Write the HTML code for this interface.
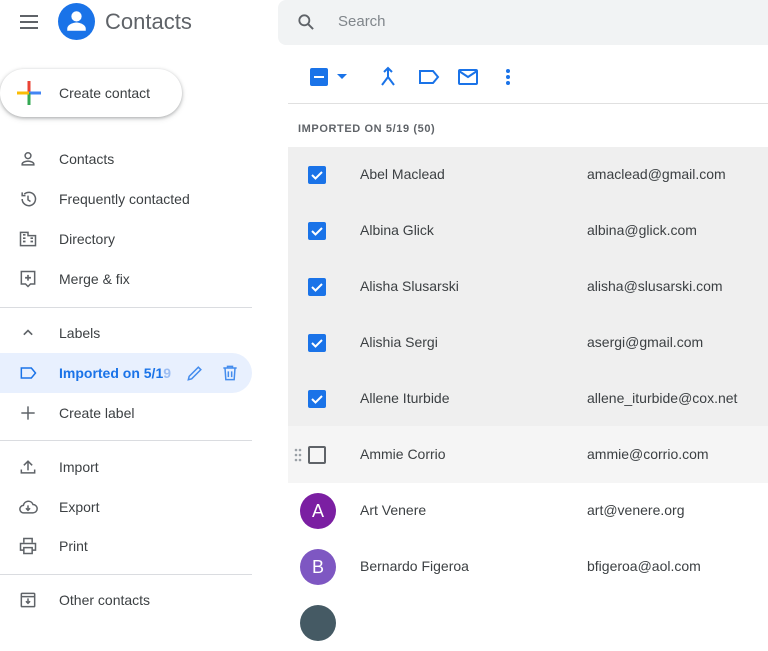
<!DOCTYPE html>
<html><head><meta charset="utf-8"><style>
*{box-sizing:border-box;margin:0;padding:0}
body{width:768px;height:611px;overflow:hidden;background:#fff;font-family:"Liberation Sans",Arial,sans-serif;color:#3c4043;position:relative}
.abs{position:absolute}
.nav{position:absolute;left:0;width:252px;height:40px;display:flex;align-items:center;font-size:14px;color:#3c4043}
.nav svg{position:absolute;left:18px}
.nav span{position:absolute;left:59px}
.hr{position:absolute;left:0;width:252px;height:1px;background:#dadce0}
.row{position:absolute;left:288px;width:480px;height:56px;font-size:14px;color:#3c4043}
.row .n{position:absolute;left:72px;top:19px}
.row .e{position:absolute;left:299px;top:19px}
.cb{position:absolute;left:20px;top:19px;width:18px;height:18px;border-radius:2px;background:#1a73e8}
.av{position:absolute;left:12px;top:10px;width:36px;height:36px;border-radius:50%;color:#fff;font-size:18px;text-align:center;line-height:36px}
</style></head><body>
<!-- header -->
<svg class="abs" style="left:19px;top:14px" width="20" height="16" viewBox="0 0 20 16"><path d="M1 2h18M1 8h18M1 14h18" stroke="#5f6368" stroke-width="2"/></svg>
<svg class="abs" style="left:58px;top:3px" width="37" height="37" viewBox="0 0 36 36"><circle cx="18" cy="18" r="18" fill="#1a73e8"/><circle cx="18" cy="13" r="5" fill="#fff"/><path d="M9 25c0-4 6-6 9-6s9 2 9 6v2H9z" fill="#fff"/></svg>
<div class="abs" style="left:105px;top:9px;font-size:22px;color:#5f6368">Contacts</div>
<div class="abs" style="left:278px;top:0;width:500px;height:45px;background:#f1f3f4;border-radius:8px"></div>
<svg class="abs" style="left:296px;top:12px" width="20" height="20" viewBox="0 0 24 24"><circle cx="10" cy="10" r="6" stroke="#5f6368" stroke-width="2.2" fill="none"/><path d="M14.5 14.5l6 6" stroke="#5f6368" stroke-width="2.4"/></svg>
<div class="abs" style="left:338px;top:13px;font-size:15px;color:#80868b">Search</div>
<!-- create -->
<div class="abs" style="left:0;top:69px;width:182px;height:48px;border-radius:24px;background:#fff;box-shadow:0 1px 3px rgba(60,64,67,.35),0 2px 6px rgba(60,64,67,.15)"></div>
<svg class="abs" style="left:16px;top:80px" width="26" height="26" viewBox="0 0 26 26"><rect x="11.5" y="1" width="3" height="12" fill="#ea4335"/><rect x="13" y="11.5" width="12" height="3" fill="#4285f4"/><rect x="11.5" y="13" width="3" height="12" fill="#34a853"/><rect x="1" y="11.5" width="12" height="3" fill="#fbbc04"/></svg>
<div class="abs" style="left:59px;top:85px;font-size:14px;color:#3c4043">Create contact</div>
<!-- nav -->
<div class="nav" style="top:139px"><svg width="20" height="20" viewBox="0 0 24 24"><circle cx="12" cy="8" r="3.5" fill="none" stroke="#5f6368" stroke-width="1.8"/><path d="M5 19v-1c0-2 4-3.5 7-3.5s7 1.5 7 3.5v1z" fill="none" stroke="#5f6368" stroke-width="1.8"/></svg><span>Contacts</span></div>
<div class="nav" style="top:179px"><svg width="20" height="20" viewBox="0 0 24 24"><path d="M5 12a8 8 0 1 0 2.5-5.8M5 4v4h4M12 8v5l3 2" fill="none" stroke="#5f6368" stroke-width="1.8"/></svg><span>Frequently contacted</span></div>
<div class="nav" style="top:219px"><svg width="20" height="20" viewBox="0 0 24 24"><path d="M3 20V4h9v4h9v12z" fill="none" stroke="#5f6368" stroke-width="1.8"/><path d="M6 7h3M6 11h3M6 15h3M15 11h3M15 15h3" stroke="#5f6368" stroke-width="2"/></svg><span>Directory</span></div>
<div class="nav" style="top:259px"><svg width="20" height="20" viewBox="0 0 24 24"><path d="M4 3h16v15h-5l-3 3-3-3H4z" fill="none" stroke="#5f6368" stroke-width="1.8"/><path d="M12 7v7M8.5 10.5h7" stroke="#5f6368" stroke-width="2"/></svg><span>Merge &amp; fix</span></div>
<div class="hr" style="top:307px"></div>
<div class="nav" style="top:313px"><svg width="20" height="20" viewBox="0 0 24 24"><path d="M7 14l5-5 5 5" fill="none" stroke="#5f6368" stroke-width="2"/></svg><span>Labels</span></div>
<div class="abs" style="left:0;top:353px;width:252px;height:40px;background:#e8f0fe;border-radius:0 20px 20px 0"></div>
<div class="nav" style="top:353px;color:#1a73e8;font-weight:bold"><svg width="20" height="20" viewBox="0 0 24 24"><path d="M4 6h12l5 6-5 6H4z" fill="none" stroke="#1a73e8" stroke-width="1.8"/></svg><span>Imported on 5/1<span style="position:static;color:#9cbdf2">9</span></span></div>
<svg class="abs" style="left:185px;top:363px" width="20" height="20" viewBox="0 0 24 24"><path d="M4 20l1-4L16 5l3 3L8 19z" fill="none" stroke="#1a73e8" stroke-width="1.8" opacity=".8"/></svg>
<svg class="abs" style="left:220px;top:363px" width="20" height="20" viewBox="0 0 24 24"><path d="M4 6h16M9 6V4h6v2M6 6l1 14h10l1-14M10 10v7M14 10v7" fill="none" stroke="#1a73e8" stroke-width="1.8" opacity=".8"/></svg>
<div class="nav" style="top:393px"><svg width="20" height="20" viewBox="0 0 24 24"><path d="M12 4v16M4 12h16" stroke="#5f6368" stroke-width="1.8"/></svg><span>Create label</span></div>
<div class="hr" style="top:440px"></div>
<div class="nav" style="top:447px"><svg width="20" height="20" viewBox="0 0 24 24"><path d="M12 16V5M7 10l5-5 5 5M4 15v4h16v-4" fill="none" stroke="#5f6368" stroke-width="1.8"/></svg><span>Import</span></div>
<div class="nav" style="top:487px"><svg width="20" height="20" viewBox="0 0 24 24"><path d="M7 19a4.5 4.5 0 0 1-.5-9A6 6 0 0 1 18 9a4.5 4.5 0 0 1 0 10z" fill="none" stroke="#5f6368" stroke-width="1.8"/><path d="M12 10v6M9.5 13.5l2.5 2.5 2.5-2.5" fill="none" stroke="#5f6368" stroke-width="1.8"/></svg><span>Export</span></div>
<div class="nav" style="top:526px"><svg width="20" height="20" viewBox="0 0 24 24"><path d="M7 8V3h10v5M7 17H3V9h18v8h-4M7 14h10v7H7z" fill="none" stroke="#5f6368" stroke-width="1.8"/></svg><span>Print</span></div>
<div class="hr" style="top:574px"></div>
<div class="nav" style="top:580px"><svg width="20" height="20" viewBox="0 0 24 24"><rect x="4" y="4" width="16" height="16" rx="1" fill="none" stroke="#5f6368" stroke-width="1.8"/><path d="M4 8h16M12 10v6M9.5 13.5l2.5 2.5 2.5-2.5" fill="none" stroke="#5f6368" stroke-width="1.8"/></svg><span>Other contacts</span></div>
<!-- toolbar -->
<div class="abs" style="left:310px;top:68px;width:18px;height:18px;border-radius:2px;background:#1a73e8"><div style="position:absolute;left:4px;top:8px;width:10px;height:2px;background:#fff"></div></div>
<svg class="abs" style="left:337px;top:74px" width="10" height="6" viewBox="0 0 10 6"><path d="M0 0h10L5 5z" fill="#1a73e8"/></svg>
<svg class="abs" style="left:378px;top:66px" width="20" height="22" viewBox="0 0 20 22"><path d="M10 2v9M6 6l4-4 4 4M10 11l-6 8M10 11l6 8" fill="none" stroke="#1a73e8" stroke-width="2"/></svg>
<svg class="abs" style="left:418px;top:68px" width="22" height="18" viewBox="0 0 22 18"><path d="M2 3h13l5 6-5 6H2z" fill="none" stroke="#1a73e8" stroke-width="2"/></svg>
<svg class="abs" style="left:457px;top:68px" width="22" height="18" viewBox="0 0 22 18"><rect x="2" y="2" width="18" height="14" rx="1" fill="none" stroke="#1a73e8" stroke-width="2"/><path d="M2 3l9 6 9-6" fill="none" stroke="#1a73e8" stroke-width="2"/></svg>
<svg class="abs" style="left:504px;top:67px" width="8" height="20" viewBox="0 0 8 20"><circle cx="4" cy="4" r="2" fill="#1a73e8"/><circle cx="4" cy="10" r="2" fill="#1a73e8"/><circle cx="4" cy="16" r="2" fill="#1a73e8"/></svg>
<div class="abs" style="left:288px;top:103px;width:480px;height:1px;background:#e0e0e0"></div>
<div class="abs" style="left:298px;top:123px;font-size:11px;font-weight:bold;letter-spacing:.6px;color:#5f6368">IMPORTED ON 5/19 (50)</div>
<!-- rows -->
<div class="abs" style="left:288px;top:147px;width:480px;height:336px;background:#efefef"></div>
<div class="abs" style="left:288px;top:426px;width:480px;height:57px;background:#f5f5f5"></div>
<div class="row" style="top:147px"><div class="cb"><svg width="18" height="18" viewBox="0 0 18 18"><path d="M4 9l3.5 3.5L14 6" fill="none" stroke="#fff" stroke-width="2"/></svg></div><div class="n">Abel Maclead</div><div class="e">amaclead@gmail.com</div></div>
<div class="row" style="top:203px"><div class="cb"><svg width="18" height="18" viewBox="0 0 18 18"><path d="M4 9l3.5 3.5L14 6" fill="none" stroke="#fff" stroke-width="2"/></svg></div><div class="n">Albina Glick</div><div class="e">albina@glick.com</div></div>
<div class="row" style="top:259px"><div class="cb"><svg width="18" height="18" viewBox="0 0 18 18"><path d="M4 9l3.5 3.5L14 6" fill="none" stroke="#fff" stroke-width="2"/></svg></div><div class="n">Alisha Slusarski</div><div class="e">alisha@slusarski.com</div></div>
<div class="row" style="top:315px"><div class="cb"><svg width="18" height="18" viewBox="0 0 18 18"><path d="M4 9l3.5 3.5L14 6" fill="none" stroke="#fff" stroke-width="2"/></svg></div><div class="n">Alishia Sergi</div><div class="e">asergi@gmail.com</div></div>
<div class="row" style="top:371px"><div class="cb"><svg width="18" height="18" viewBox="0 0 18 18"><path d="M4 9l3.5 3.5L14 6" fill="none" stroke="#fff" stroke-width="2"/></svg></div><div class="n">Allene Iturbide</div><div class="e">allene_iturbide@cox.net</div></div>
<div class="row" style="top:427px"><svg class="abs" style="left:6px;top:21px" width="8" height="14" viewBox="0 0 8 14"><g fill="#9aa0a6"><circle cx="2" cy="2" r="1.3"/><circle cx="6" cy="2" r="1.3"/><circle cx="2" cy="7" r="1.3"/><circle cx="6" cy="7" r="1.3"/><circle cx="2" cy="12" r="1.3"/><circle cx="6" cy="12" r="1.3"/></g></svg><div class="cb" style="background:none;border:2px solid #5f6368"></div><div class="n">Ammie Corrio</div><div class="e">ammie@corrio.com</div></div>
<div class="row" style="top:483px"><div class="av" style="background:#7b1fa2">A</div><div class="n">Art Venere</div><div class="e">art@venere.org</div></div>
<div class="row" style="top:539px"><div class="av" style="background:#7e57c2">B</div><div class="n">Bernardo Figeroa</div><div class="e">bfigeroa@aol.com</div></div>
<div class="row" style="top:595px"><div class="av" style="background:#455a64"></div></div>
</body></html>
